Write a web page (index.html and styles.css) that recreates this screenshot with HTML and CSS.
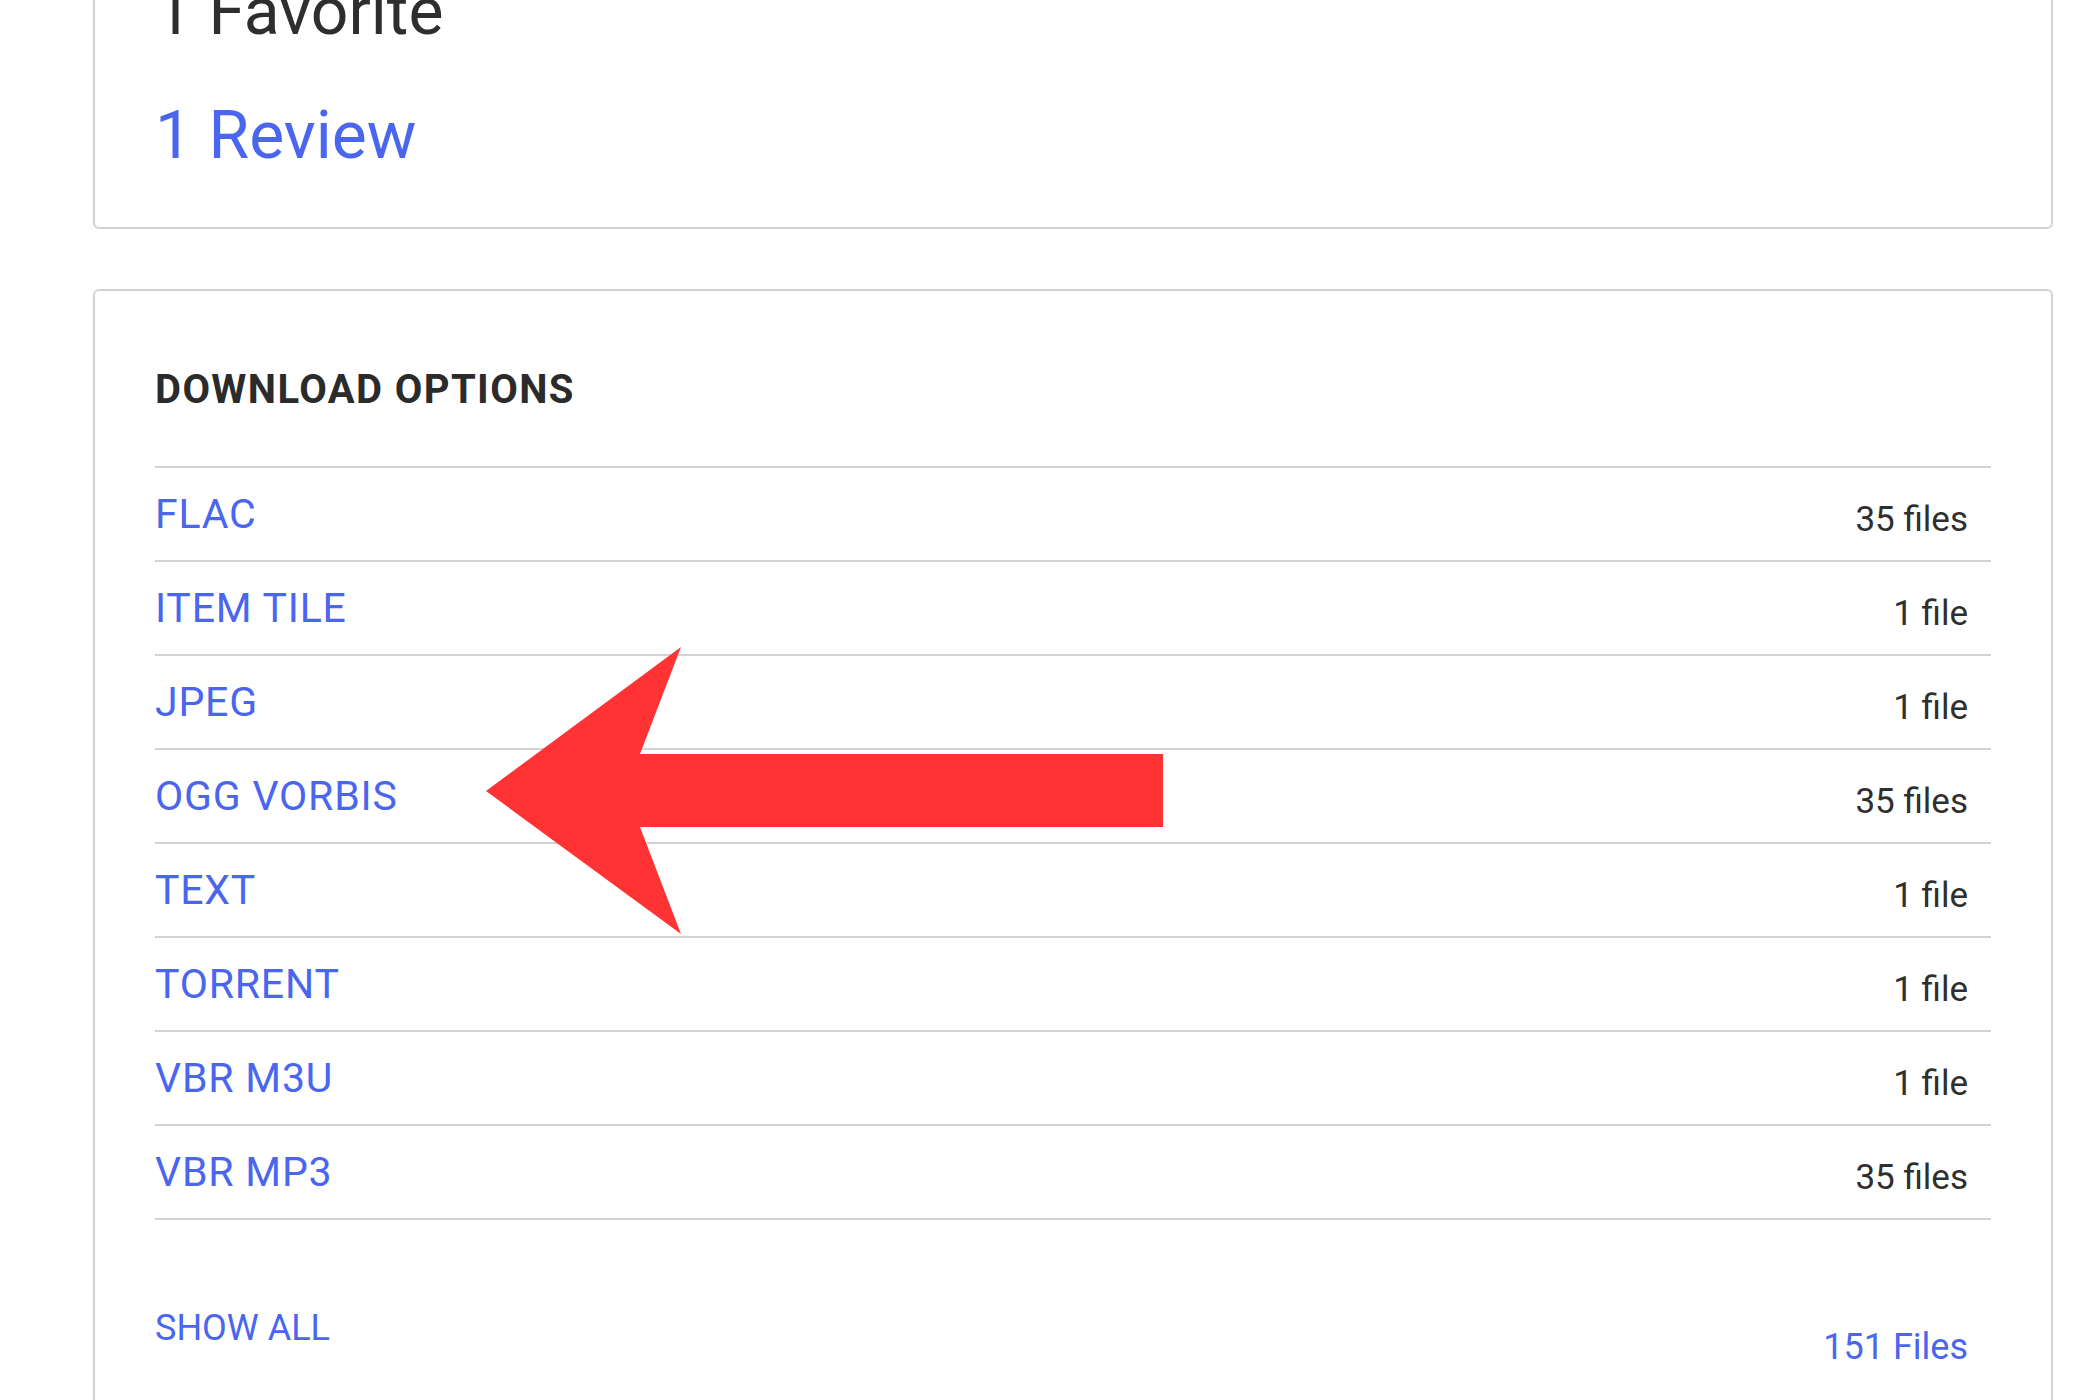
FILE: index.html
```html
<!DOCTYPE html>
<html lang="en">
<head>
<meta charset="utf-8">
<title>Download options</title>
<link rel="stylesheet" href="styles.css">
</head>
<body>
<main class="page">
  <section class="card stats">
    <div class="stat">1 Favorite</div>
    <a class="stat stat-link" href="#">1 Review</a>
  </section>
  <section class="card downloads">
    <h2 class="dl-title">DOWNLOAD OPTIONS</h2>
    <ul class="dl-list">
      <li class="dl-row"><a class="dl-name" href="#">FLAC</a><span class="dl-count">35 files</span></li>
      <li class="dl-row"><a class="dl-name" href="#">ITEM TILE</a><span class="dl-count">1 file</span></li>
      <li class="dl-row"><a class="dl-name" href="#">JPEG</a><span class="dl-count">1 file</span></li>
      <li class="dl-row"><a class="dl-name" href="#">OGG VORBIS</a><span class="dl-count">35 files</span></li>
      <li class="dl-row"><a class="dl-name" href="#">TEXT</a><span class="dl-count">1 file</span></li>
      <li class="dl-row"><a class="dl-name" href="#">TORRENT</a><span class="dl-count">1 file</span></li>
      <li class="dl-row"><a class="dl-name" href="#">VBR M3U</a><span class="dl-count">1 file</span></li>
      <li class="dl-row"><a class="dl-name" href="#">VBR MP3</a><span class="dl-count">35 files</span></li>
    </ul>
    <div class="dl-footer">
      <a class="show-all" href="#">SHOW ALL</a>
      <a class="total" href="#">151 Files</a>
    </div>
    <svg class="arrow" width="677" height="287" viewBox="0 0 677 287" aria-hidden="true">
      <polygon points="0,144 195,0 154,107 677,107 677,180 154,180 195,287" fill="#ff3333"/>
    </svg>
  </section>
</main>
</body>
</html>
```
FILE: styles.css
```css
html, body {
  margin: 0;
  padding: 0;
  background: #ffffff;
  overflow: hidden;
}
body {
  font-family: Roboto, "Liberation Sans", Arial, sans-serif;
  color: #2f2f2f;
}
a {
  text-decoration: none;
  color: #4a66ef;
}
.page {
  margin-top: -84px;
  margin-left: 93px;
  width: 1960px;
  display: flex;
  flex-direction: column;
  gap: 60px;
}
.card {
  position: relative;
  background: #ffffff;
  border: 2px solid #d3d3d3;
  border-radius: 6px;
  padding: 0 60px;
}
.stats {
  padding-top: 60px;
  padding-bottom: 57px;
  display: flex;
  flex-direction: column;
  gap: 56px;
}
.stat {
  display: block;
  font-size: 66px;
  line-height: 68px;
  color: #2e2e2e;
}
.stat-link {
  color: #4a66ef;
}
.downloads {
  padding-top: 79px;
  padding-bottom: 80px;
}
.dl-title {
  margin: 0 0 56px 0;
  font-size: 40px;
  line-height: 40px;
  font-weight: 700;
  letter-spacing: 1.4px;
  color: #2b2b2b;
}
.dl-list {
  list-style: none;
  margin: 0;
  padding: 0;
  border-top: 2px solid #d3d3d3;
}
.dl-row {
  height: 92px;
  display: flex;
  justify-content: space-between;
  align-items: flex-start;
  padding-right: 23px;
  border-bottom: 2px solid #d3d3d3;
}
.dl-name {
  margin-top: 26px;
  font-size: 41px;
  line-height: 41px;
  letter-spacing: 0.8px;
}
.dl-count {
  margin-top: 34px;
  font-size: 35px;
  line-height: 35px;
  color: #2f2f2f;
}
.dl-footer {
  margin-top: 90px;
  display: flex;
  justify-content: space-between;
  align-items: flex-start;
  padding-right: 23px;
}
.show-all {
  font-size: 36px;
  line-height: 37px;
}
.total {
  margin-top: 19px;
  font-size: 36px;
  line-height: 36px;
}
.arrow {
  position: absolute;
  left: 391px;
  top: 356px;
}
```
